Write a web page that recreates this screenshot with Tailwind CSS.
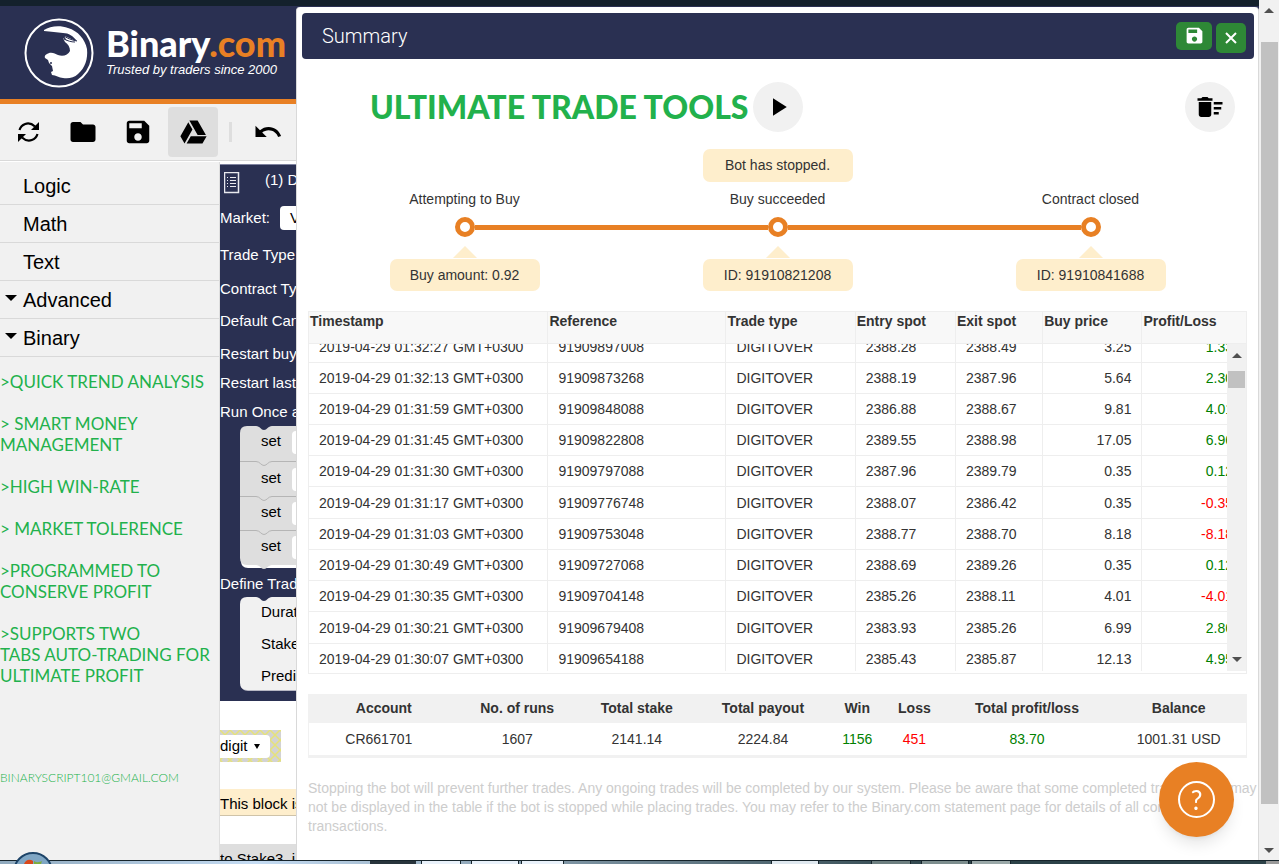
<!DOCTYPE html>
<html lang="en">
<head>
    <meta charset="utf-8">
    <meta name="viewport" content="width=device-width, initial-scale=1">
    <title>Binary.com Bot - Summary</title>
    <script src="https://cdn.jsdelivr.net/npm/@tailwindcss/browser@4"></script>
</head>
<body class="h-screen overflow-hidden flex flex-col bg-white font-['Liberation_Sans',Arial,sans-serif] text-[#333]">
    <div class="flex flex-1 min-h-0">
        <div class="flex flex-col flex-1 min-w-0">
            <div class="h-[6px] shrink-0 bg-[#14212c]"></div>
            <div class="flex flex-1 min-h-0 bg-[#2a3052]">

                <!-- Editor -->
                <div class="w-[296px] shrink-0 flex flex-col overflow-hidden bg-white">
                    <header class="h-[98px] shrink-0 flex items-center bg-[#2a3052] border-b-[5px] border-[#e88024] pl-6 gap-3">
                        <svg class="size-[70px] shrink-0" viewBox="24 17 70 70">
                            <circle cx="59" cy="52" r="33.5" fill="none" stroke="#fff" stroke-width="2"/>
                            <path fill="#fff" d="M44 29C50 25 60 24 68 27c10 3 17 11 19 21 1 10-2 19-9 25-4 4-10 5-15 4-4 0-7-3-11-3l-1-3 2-1-1-5-3-3-1-3-3-2c-1-3 2-4 4-5 4-1 6 1 9 2 5 2 10 0 12-4 0-4-2-7-5-9l-2-4 4 3-3-5c4 1 8 4 13 5-4-5-8-8-14-8-6-1-12-1-19-2z"/>
                            <path d="M62 34c5 3 9 5 15 6M64 38c4 2 7 3 11 3" fill="none" stroke="#2a3052" stroke-width="1"/>
                            <circle cx="51" cy="62" r="1" fill="#2a3052"/>
                        </svg>
                        <div>
                            <div class="font-[Lato,sans-serif] font-black text-[36px] leading-[30px] pb-1 text-white">Binary<span class="text-[#e88024]">.com</span></div>
                            <div class="italic text-[13px] leading-4 text-white whitespace-nowrap">Trusted by traders since 2000</div>
                        </div>
                    </header>

                    <div class="h-[57px] shrink-0 flex items-center gap-[5px] pl-[3px] bg-[#f1f1f1] border-b border-[#d9d9d9]">
                        <button class="size-[50px] shrink-0 grid place-items-center" aria-label="Reset">
                            <svg class="size-6" viewBox="0 0 24 24">
                                <path d="M3.500 10C5 5 12 0 19 6.500M21.500 14C20 19 13 24 6 17.500" fill="none" stroke="#000" stroke-width="2.200"/>
                                <path d="M23 2v8h-8zM2 22v-8h8z"/>
                            </svg>
                        </button>
                        <button class="size-[50px] shrink-0 grid place-items-center" aria-label="Open">
                            <svg class="size-[30px]" viewBox="0 0 24 24"><path d="M10 4H4c-1.100 0-1.990.9-1.990 2L2 18c0 1.100.9 2 2 2h16c1.100 0 2-.9 2-2V8c0-1.100-.9-2-2-2h-8l-2-2z"/></svg>
                        </button>
                        <button class="size-[50px] shrink-0 grid place-items-center" aria-label="Save">
                            <svg class="size-[30px]" viewBox="0 0 24 24"><path d="M17 3H5c-1.110 0-2 .9-2 2v14c0 1.100.89 2 2 2h14c1.100 0 2-.9 2-2V7l-4-4zm-5 16c-1.660 0-3-1.340-3-3s1.340-3 3-3 3 1.340 3 3-1.340 3-3 3zm3-10H5V5h10v4z"/></svg>
                        </button>
                        <button class="size-[50px] shrink-0 grid place-items-center rounded bg-[#dedede]" aria-label="Google Drive">
                            <svg class="size-[29px]" viewBox="0 0 24 24"><path d="M7.710 3.500L1.150 15l3.430 6 6.550-11.500M9.730 15L6.300 21h13.120l3.430-6M22.280 14L15.420 2H8.580l6.850 12z"/></svg>
                        </button>
                        <span class="w-[3px] h-5 mx-[6px] shrink-0 bg-[#dedede]"></span>
                        <button class="size-[50px] shrink-0 grid place-items-center" aria-label="Undo">
                            <svg class="size-[30px]" viewBox="0 0 24 24"><path d="M12.500 8c-2.650 0-5.050.99-6.900 2.600L2 7v9h9l-3.620-3.620c1.390-1.160 3.160-1.880 5.120-1.880 3.540 0 6.550 2.310 7.600 5.500l2.370-.78C21.080 11.030 17.150 8 12.500 8z"/></svg>
                        </button>
                    </div>

                    <div class="flex flex-1 min-h-0 pt-px">
                        <!-- Toolbox -->
                        <nav class="w-[220px] shrink-0 bg-[#f1f1f1] border-r border-[#dedede] pt-[5px] text-xl text-black">
                            <a href="#" class="flex items-center h-[38px] pl-[23px] border-b border-[#d9d9d9]">Logic</a>
                            <a href="#" class="flex items-center h-[38px] pl-[23px] border-b border-[#d9d9d9]">Math</a>
                            <a href="#" class="flex items-center h-[38px] pl-[23px] border-b border-[#d9d9d9]">Text</a>
                            <a href="#" class="flex items-center h-[38px] pl-[5px] gap-[6px] border-b border-[#d9d9d9]"><svg class="w-3 h-[10px]" viewBox="0 0 12 10"><path d="M0 0h12L6 6z"/></svg>Advanced</a>
                            <a href="#" class="flex items-center h-[38px] pl-[5px] gap-[6px] border-b border-[#d9d9d9]"><svg class="w-3 h-[10px]" viewBox="0 0 12 10"><path d="M0 0h12L6 6z"/></svg>Binary</a>
                            <div class="mt-[14px] font-[Lato,sans-serif] text-[17px] leading-[21px] text-[#22b14c] whitespace-nowrap">
                                <p>&gt;QUICK TREND ANALYSIS</p>
                                <p class="mt-[21px]">&gt; SMART MONEY<br>MANAGEMENT</p>
                                <p class="mt-[21px]">&gt;HIGH WIN-RATE</p>
                                <p class="mt-[21px]">&gt; MARKET TOLERENCE</p>
                                <p class="mt-[21px]">&gt;PROGRAMMED TO<br>CONSERVE PROFIT</p>
                                <p class="mt-[21px]">&gt;SUPPORTS TWO<br>TABS AUTO-TRADING FOR<br>ULTIMATE PROFIT</p>
                            </div>
                            <p class="mt-[82px] font-[Lato,sans-serif] font-light text-xs leading-5 text-[#22b14c]">BINARYSCRIPT101@GMAIL.COM</p>
                        </nav>

                        <!-- Workspace -->
                        <div class="flex-1 min-w-0 overflow-hidden pt-[2px] text-[15px] leading-5 text-white whitespace-nowrap">
                            <div class="h-[537px] bg-[#2a3052] border-t border-[#7f83a0] pt-[5px]">
                                <div class="flex items-center h-5 pl-1">
                                    <svg class="w-[16px] h-[22px] mt-[6px] shrink-0" viewBox="0 0 16 22" fill="none" stroke="#e8e8ee"><path d="M.5.5h14v20H.5z" stroke-width="1.500"/><path d="M6 5.500h6M6 8.500h6M6 11.500h6M6 14.500h6M3 5.500h1M3 8.500h1M3 11.500h1M3 14.500h1"/></svg>
                                    <span class="ml-[25px]">(1) Define</span>
                                </div>
                                <div class="flex items-center h-5 mt-[18px]">Market:<span class="ml-[10px] pl-[10px] h-6 leading-6 rounded bg-white text-black flex-1">Volatility</span></div>
                                <div class="mt-[17px]">Trade Type:</div>
                                <div class="mt-[14px]">Contract Type:</div>
                                <div class="mt-[12px]">Default Candle</div>
                                <div class="mt-[13px]">Restart buy/sell</div>
                                <div class="mt-[9px]">Restart last</div>
                                <div class="mt-[9px]">Run Once at</div>
                                <div class="relative h-[144px] mt-[3px] ml-5 pt-[6px] text-black">
                                    <svg class="absolute left-0 top-0 w-[120px] h-[144px]" viewBox="0 0 120 144">
                                        <path fill="#fff" d="M1 12v124q0 7 7 7h112V12z"/>
                                        <path fill="#dedede" d="M0 8q0-7 7-7h9c4 0 5 4 8 4s4-4 8-4h88v139H32c-4 0-5 4-8 4s-4-4-8-4H7q-7 0-7-7z"/>
                                        <path fill="none" stroke="#b5b5b5" d="M0 36.500h16c4 0 5 4 8 4s4-4 8-4h88M0 71.500h16c4 0 5 4 8 4s4-4 8-4h88M0 105.500h16c4 0 5 4 8 4s4-4 8-4h88"/>
                                        <path fill="#fff" d="M120 6H56q-4 0-4 4v15q0 4 4 4h64zM120 43H56q-4 0-4 4v15q0 4 4 4h64zM120 77H56q-4 0-4 4v15q0 4 4 4h64zM120 111H56q-4 0-4 4v15q0 4 4 4h64z"/>
                                    </svg>
                                    <div class="relative grid gap-[14px] pl-[21px]"><span class="mb-[3px]">set</span><span>set</span><span>set</span><span>set</span></div>
                                </div>
                                <div class="mt-[5px]">Define Trade</div>
                                <div class="relative h-[96px] mt-[2px] ml-5 pt-[6px] text-black">
                                    <svg class="absolute left-0 top-0 w-[120px] h-[96px]" viewBox="0 0 120 96">
                                        <path fill="#b8b8c4" d="M1 10v78q0 7 7 7h112V10z"/>
                                        <path fill="#f1f1f1" d="M0 8q0-7 7-7h9c4 0 5 4 8 4s4-4 8-4h88v93H7q-7 0-7-7z"/>
                                    </svg>
                                    <div class="relative grid gap-3 pl-[21px]"><span>Duration</span><span>Stake:</span><span>Prediction</span></div>
                                </div>
                            </div>
                            <div class="relative w-[61px] h-8 mt-[29px] flex items-center bg-[#d3d3d3] text-black">
                                <svg class="absolute inset-0 size-full">
                                    <defs><pattern id="hatch" width="10" height="10" patternUnits="userSpaceOnUse"><path d="M0 0l10 10M10 0L0 10" stroke="#e6e27a" stroke-width="1.500"/></pattern></defs>
                                    <rect width="100%" height="100%" fill="url(#hatch)"/>
                                </svg>
                                <span class="relative flex items-center gap-[6px] w-[50px] h-[23px] rounded-r bg-white">digit<svg class="w-[6px] h-[5px]" viewBox="0 0 6 5"><path d="M0 0h6L3 5z"/></svg></span>
                            </div>
                            <div class="h-[27px] mt-[27px] pt-[5px] bg-[#feeecc] border-b border-[#cfc3a8] text-black">This block is</div>
                            <div class="h-8 mt-[28px] pt-[5px] bg-[#dedede] text-black">to Stake3, i</div>
                        </div>
                    </div>
                </div>

                <!-- Summary panel -->
                <section class="flex flex-col flex-1 min-w-0 mt-px bg-white border-x border-[#d9d9d9] rounded-t-[4px] pt-[6px] overflow-hidden">
                    <div class="flex items-center h-[46px] shrink-0 ml-[5px] mr-1 pl-5 pr-2 rounded bg-[#2a3052] text-white">
                        <h1 class="flex-1 font-[Roboto,sans-serif] font-light text-xl">Summary</h1>
                        <button class="grid place-items-center w-9 h-7 mb-px rounded-[5px] bg-[#2e8836]" aria-label="Save">
                            <svg class="size-[21px]" viewBox="0 0 24 24" fill="#fff"><path d="M17 3H5c-1.110 0-2 .9-2 2v14c0 1.100.89 2 2 2h14c1.100 0 2-.9 2-2V7l-4-4zm-5 16c-1.660 0-3-1.340-3-3s1.340-3 3-3 3 1.340 3 3-1.340 3-3 3zm3-10H5V5h10v4z"/></svg>
                        </button>
                        <button class="grid place-items-center size-[30px] mt-[3px] ml-1 rounded-[5px] bg-[#2e8836]" aria-label="Close">
                            <svg class="size-3" viewBox="0 0 12 12"><path d="M1 1l10 10M11 1L1 11" stroke="#fff" stroke-width="2"/></svg>
                        </button>
                    </div>

                    <div class="flex flex-col mt-[23px] mx-[11px] text-sm">
                        <div class="grid grid-cols-[1fr_50px_1fr] items-center">
                            <h2 class="text-right pr-1 font-[Lato,sans-serif] font-black text-[32px] leading-[50px] text-[#22b14c] whitespace-nowrap">ULTIMATE TRADE TOOLS</h2>
                            <button class="grid place-items-center size-[50px] rounded-full bg-[#f1f1f1]" aria-label="Run">
                                <svg class="size-[30px]" viewBox="0 0 24 24"><path d="M8 5v14l11-7z"/></svg>
                            </button>
                            <button class="grid place-items-center size-[50px] justify-self-end mr-3 rounded-full bg-[#f1f1f1]" aria-label="Clear">
                                <svg class="size-[30px]" viewBox="0 0 24 24"><path d="M15 16h4v2h-4zm0-8h7v2h-7zm0 4h6v2h-6zM3 18c0 1.100.9 2 2 2h6c1.100 0 2-.9 2-2V8H3v10zM14 5h-3l-1-1H6L5 5H2v2h12z"/></svg>
                            </button>
                        </div>

                        <div class="self-center grid place-items-center w-[150px] h-[33px] mt-[17px] pb-[2px] rounded-[7px] bg-[#feeecc]">Bot has stopped.</div>

                        <ol class="grid grid-cols-3 mt-[7px]">
                            <li class="flex flex-col items-center">
                                <span class="leading-5">Attempting to Buy</span>
                                <span class="flex items-center w-full mt-2"><i class="flex-1"></i><i class="size-5 rounded-full border-[5px] border-[#e88024]"></i><i class="flex-1 h-[5px] bg-[#e88024]"></i></span>
                                <svg class="w-6 h-3 mt-[9px]" viewBox="0 0 24 12"><path d="M12 0l12 12H0z" fill="#feeecc"/></svg>
                                <span class="grid place-items-center w-[150px] h-8 mt-px pb-px rounded-[7px] bg-[#feeecc]">Buy amount: 0.92</span>
                            </li>
                            <li class="flex flex-col items-center">
                                <span class="leading-5">Buy succeeded</span>
                                <span class="flex items-center w-full mt-2"><i class="flex-1 h-[5px] bg-[#e88024]"></i><i class="size-5 rounded-full border-[5px] border-[#e88024]"></i><i class="flex-1 h-[5px] bg-[#e88024]"></i></span>
                                <svg class="w-6 h-3 mt-[9px]" viewBox="0 0 24 12"><path d="M12 0l12 12H0z" fill="#feeecc"/></svg>
                                <span class="grid place-items-center w-[150px] h-8 mt-px pb-px rounded-[7px] bg-[#feeecc]">ID: 91910821208</span>
                            </li>
                            <li class="flex flex-col items-center">
                                <span class="leading-5">Contract closed</span>
                                <span class="flex items-center w-full mt-2"><i class="flex-1 h-[5px] bg-[#e88024]"></i><i class="size-5 rounded-full border-[5px] border-[#e88024]"></i><i class="flex-1"></i></span>
                                <svg class="w-6 h-3 mt-[9px]" viewBox="0 0 24 12"><path d="M12 0l12 12H0z" fill="#feeecc"/></svg>
                                <span class="grid place-items-center w-[150px] h-8 mt-px pb-px rounded-[7px] bg-[#feeecc]">ID: 91910841688</span>
                            </li>
                        </ol>

                        <!-- Trades -->
                        <div class="mt-5 border border-[#eee]">
                            <table class="w-full table-fixed bg-[#f8f8f8]">
                                <colgroup><col class="w-[25.5%]"><col class="w-[19%]"><col class="w-[13.8%]"><col class="w-[10.7%]"><col class="w-[9.3%]"><col class="w-[10.6%]"><col></colgroup>
                                <thead>
                                    <tr class="h-[31px] text-left align-top border-b border-[#eee] divide-x divide-[#eee] whitespace-nowrap leading-[18px]">
                                        <th class="px-px">Timestamp</th><th class="px-px">Reference</th><th class="px-px">Trade type</th><th class="px-px">Entry spot</th><th class="px-px">Exit spot</th><th class="px-px">Buy price</th><th class="px-px">Profit/Loss</th>
                                    </tr>
                                </thead>
                            </table>
                            <div class="relative h-[327px] mb-[2px] overflow-hidden">
                                <table class="w-full table-fixed -mt-3">
                                    <colgroup><col class="w-[25.5%]"><col class="w-[19%]"><col class="w-[13.8%]"><col class="w-[10.7%]"><col class="w-[9.3%]"><col class="w-[10.6%]"><col></colgroup>
                                    <tbody id="trades"></tbody>
                                </table>
                                <div class="absolute right-0 inset-y-0 w-[19px] flex flex-col items-center bg-[#f1f1f1] py-[9px]">
                                    <svg class="w-[10px] h-[5px]" viewBox="0 0 10 5"><path d="M0 5h10L5 0z" fill="#505050"/></svg>
                                    <span class="w-[17px] h-[17px] mt-[13px] bg-[#c1c1c1]"></span>
                                    <svg class="w-[10px] h-[5px] mt-auto" viewBox="0 0 10 5"><path d="M0 0h10L5 5z" fill="#505050"/></svg>
                                </div>
                            </div>
                        </div>

                        <!-- Totals -->
                        <table class="w-full table-fixed mt-5 border-x border-b-3 border-[#f1f1f1] text-center">
                            <colgroup><col class="w-[16%]"><col class="w-[12.5%]"><col class="w-[13%]"><col class="w-[13.9%]"><col class="w-[6.2%]"><col class="w-[6%]"><col class="w-[18%]"><col></colgroup>
                            <thead>
                                <tr class="h-[29px] bg-[#f1f1f1] whitespace-nowrap"><th>Account</th><th>No. of runs</th><th>Total stake</th><th>Total payout</th><th>Win</th><th>Loss</th><th>Total profit/loss</th><th>Balance</th></tr>
                            </thead>
                            <tbody>
                                <tr class="h-[34px]"><td class="pr-[10px]">CR661701</td><td>1607</td><td>2141.14</td><td>2224.84</td><td class="text-[green]">1156</td><td class="text-[red]">451</td><td class="text-[green]">83.70</td><td>1001.31 USD</td></tr>
                            </tbody>
                        </table>

                        <p class="mt-[21px] -mr-[10px] leading-[19px] text-[#cdcdcd]">Stopping the bot will prevent further trades. Any ongoing trades will be completed by our system. Please be aware that some completed transactions may not be displayed in the table if the bot is stopped while placing trades. You may refer to the Binary.com statement page for details of all completed transactions.</p>
                    </div>
                </section>
            </div>
        </div>

        <!-- Page scrollbar -->
        <div class="w-5 shrink-0 flex flex-col items-center bg-[#f1f1f1] pt-2 pb-[7px]">
            <svg class="w-[10px] h-[5px]" viewBox="0 0 10 5"><path d="M0 5h10L5 0z" fill="#505050"/></svg>
            <span class="w-[17px] h-[762px] mt-[29px] bg-[#c1c1c1]"></span>
            <svg class="w-[10px] h-[5px] mt-auto" viewBox="0 0 10 5"><path d="M0 0h10L5 5z" fill="#505050"/></svg>
        </div>
    </div>

    <!-- Taskbar -->
    <div class="h-1 shrink-0 flex bg-gradient-to-r from-[#8fa9bd] via-[#c5dcf3] via-20% to-[#2c4248] to-75% border-t border-[#17252c]">
        <div class="relative w-[370px]">
            <svg class="absolute left-[13px] bottom-0 w-10 h-3" viewBox="0 0 40 12">
                <circle cx="20" cy="20" r="19" fill="#7fa6c4" stroke="#1d4468" stroke-width="2"/>
                <path d="M11 12c2-5 6-5 9-3v3z" fill="#d9481c"/><path d="M21 9c3 2 6 1 8 0l-1 3h-7z" fill="#7fae3c"/>
            </svg>
        </div>
        <span class="w-[46px] bg-[#28343c]"></span>
        <span class="w-10 ml-[5px] bg-[#e9f1fa] border-x border-[#17252c]"></span>
        <span class="w-12 ml-[10px] bg-[#e9f1fa] border-x border-[#17252c]"></span>
        <span class="w-[43px] ml-[2px] bg-[#e9f1fa] border-x border-[#17252c]"></span>
        <span class="w-12 ml-[207px] bg-[#dfe8ef] border-x border-[#17252c]"></span>
        <span class="w-10 ml-[52px] bg-[#6d7f80] border-x border-[#17252c]"></span>
        <span class="w-12 ml-[10px] bg-[#7d8e8e] border-x border-[#17252c]"></span>
        <span class="w-10 ml-[2px] bg-[#9aa8a8] border-x border-[#17252c]"></span>
        <span class="w-[13px] ml-auto bg-[#9a9a9a]"></span>
    </div>

    <button class="fixed right-[45px] bottom-[27px] grid place-items-center size-[75px] rounded-full bg-[#e88024] shadow-lg" aria-label="Help">
        <span class="grid place-items-center size-[37px] rounded-full border-2 border-white font-[Lato,sans-serif] text-[26px] leading-none text-white">?</span>
    </button>

    <script>
        const trades = [
            ["01:32:27", "91909897008", "2388.28", "2388.49", "3.25", "1.33"],
            ["01:32:13", "91909873268", "2388.19", "2387.96", "5.64", "2.30"],
            ["01:31:59", "91909848088", "2386.88", "2388.67", "9.81", "4.01"],
            ["01:31:45", "91909822808", "2389.55", "2388.98", "17.05", "6.96"],
            ["01:31:30", "91909797088", "2387.96", "2389.79", "0.35", "0.12"],
            ["01:31:17", "91909776748", "2388.07", "2386.42", "0.35", "-0.35"],
            ["01:31:03", "91909753048", "2388.77", "2388.70", "8.18", "-8.18"],
            ["01:30:49", "91909727068", "2388.69", "2389.26", "0.35", "0.12"],
            ["01:30:35", "91909704148", "2385.26", "2388.11", "4.01", "-4.01"],
            ["01:30:21", "91909679408", "2383.93", "2385.26", "6.99", "2.86"],
            ["01:30:07", "91909654188", "2385.43", "2385.87", "12.13", "4.95"]
        ];

        document.getElementById("trades").innerHTML = trades.map(([time, ref, entry, exit, price, profit], i) => `
            <tr class="${i % 4 === 1 && i > 1 ? "h-8" : "h-[31px]"} border-b border-[#eee] divide-x divide-[#eee] whitespace-nowrap">
                <td class="pl-[10px]">2019-04-29 ${time} GMT+0300</td>
                <td class="pl-[10px]">${ref}</td>
                <td class="pl-[10px]">DIGITOVER</td>
                <td class="pl-[10px]">${entry}</td>
                <td class="pl-[10px]">${exit}</td>
                <td class="pr-[10px] text-right">${price}</td>
                <td class="pr-[13px] text-right ${profit < 0 ? "text-[red]" : "text-[green]"}">${profit}</td>
            </tr>`).join("");
    </script>
</body>
</html>
